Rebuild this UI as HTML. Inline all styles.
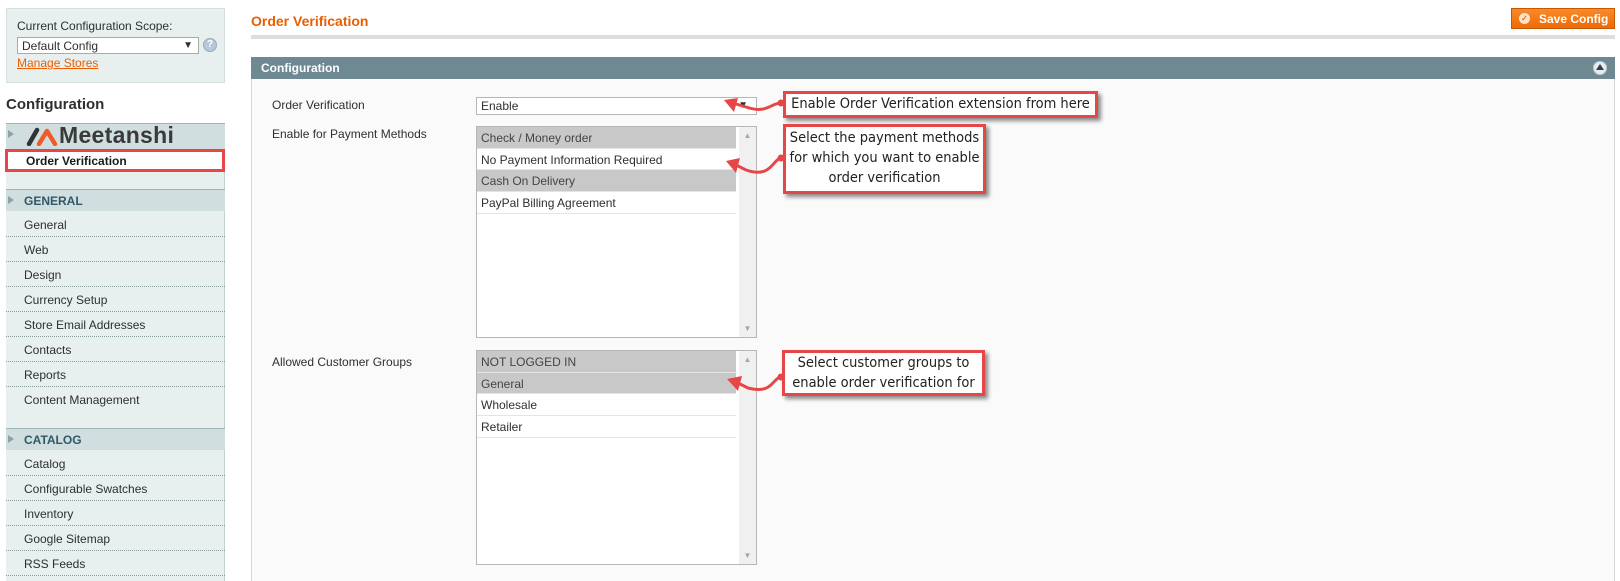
<!DOCTYPE html>
<html><head><meta charset="utf-8"><style>
*{margin:0;padding:0;box-sizing:border-box}
body{width:1620px;height:581px;overflow:hidden;background:#fff;font-family:"Liberation Sans",Arial,sans-serif;font-size:12px;color:#2f2f2f;position:relative}
.a{position:absolute}
.side{left:6px;top:8px;width:219px;height:75px;background:#e7efef;border:1px solid #d6dfdf}
.nav{left:6px;width:219px;background:#e7efef;border-right:1px solid #c2d0d1}
.hd{position:absolute;left:6px;width:219px;height:22px;background:#d1dedf;border-top:1px solid #9fb3b6;color:#2f5966;font-weight:bold;font-size:12px;padding:4px 0 0 18px}
.hd:before{content:"";position:absolute;left:2px;top:6px;border-left:6px solid #8aa3a8;border-top:4px solid transparent;border-bottom:4px solid transparent}
.it{position:absolute;left:6px;width:219px;height:25px;border-bottom:1px dotted #8a9a9c;padding:6px 0 0 18px;color:#2f2f2f}
.lbl{position:absolute;left:272px;color:#2f2f2f}
.box{position:absolute;left:476px;width:281px;background:#fff;border:1px solid #b6b6b6}
.row{height:21.7px;padding:4px 0 0 4px;border-bottom:1px solid #e4e4e4;width:259px}
.sel{background:#c8c8c8;color:#444}
.sb{position:absolute;right:0;top:0;bottom:0;width:17px;background:#f0f0f0;color:#a6a6a6;font-size:8px;text-align:center}
.co{position:absolute;background:#fff;border:3px solid #e64646;box-shadow:3px 3px 4px rgba(0,0,0,.45);font-family:"DejaVu Sans Condensed","Liberation Sans",sans-serif;font-size:14.5px;color:#222;text-align:center;line-height:20px;white-space:nowrap}
</style></head><body>
<div class="a side"></div>
<div class="a" style="left:17px;top:19px;font-size:12px">Current Configuration Scope:</div>
<div class="a" style="left:17px;top:37px;width:182px;height:17px;border:1px solid #aaa;background:#fff;padding:1px 4px;font-size:12px">Default Config<span style="position:absolute;right:5px;top:2px;font-size:10px">▼</span></div>
<div class="a" style="left:203px;top:38px;width:14px;height:14px;border-radius:50%;background:#b7c9d8;border:1px solid #9ab;color:#fff;font-size:10px;text-align:center;line-height:12px;font-weight:bold">?</div>
<div class="a" style="left:17px;top:56px;color:#eb5e00;text-decoration:underline">Manage Stores</div>
<div class="a" style="left:6px;top:96px;font-size:15px;font-weight:bold;color:#2f2f2f">Configuration</div>
<div class="a nav" style="top:123px;height:458px"></div>
<div class="a" style="left:6px;top:123px;width:219px;height:26px;background:#d1dedf;border-top:1px solid #9fb3b6"></div>
<div class="a" style="left:8px;top:130px;border-left:6px solid #8aa3a8;border-top:4px solid transparent;border-bottom:4px solid transparent"></div>
<svg class="a" style="left:26px;top:126px" width="36" height="20"><path d="M3 18 L11 4" stroke="#333" stroke-width="4.5" stroke-linecap="round"/><path d="M13 18 L21 5 L29 18" stroke="#f05a28" stroke-width="4.5" fill="none" stroke-linecap="round" stroke-linejoin="round"/></svg>
<div class="a" style="left:59px;top:122px;font-size:23px;font-weight:bold;color:#3a3a3a;letter-spacing:0.3px">Meetanshi</div>
<div class="a" style="left:5px;top:149px;width:220px;height:23px;border:3px solid #e64646;background:#fff;padding:2px 0 0 18px;font-weight:bold;color:#1a1a1a">Order Verification</div>
<div class="hd" style="top:189px">GENERAL</div>
<div class="it" style="top:212px">General</div>
<div class="it" style="top:237px">Web</div>
<div class="it" style="top:262px">Design</div>
<div class="it" style="top:287px">Currency Setup</div>
<div class="it" style="top:312px">Store Email Addresses</div>
<div class="it" style="top:337px">Contacts</div>
<div class="it" style="top:362px">Reports</div>
<div class="it" style="top:387px;border:none">Content Management</div>
<div class="hd" style="top:428px">CATALOG</div>
<div class="it" style="top:451px">Catalog</div>
<div class="it" style="top:476px">Configurable Swatches</div>
<div class="it" style="top:501px">Inventory</div>
<div class="it" style="top:526px">Google Sitemap</div>
<div class="it" style="top:551px">RSS Feeds</div>

<div class="a" style="left:251px;top:13px;font-size:14px;font-weight:bold;color:#eb5e00">Order Verification</div>
<div class="a" style="left:251px;top:35px;width:1364px;height:4px;background:#dedede"></div>
<div class="a" style="left:1511px;top:8px;width:104px;height:21px;background:linear-gradient(#f98a28,#ee6a07);border:1px solid #c75700;color:#fff;font-weight:bold;font-size:12px;padding:3px 0 0 27px">Save Config</div>
<div class="a" style="left:1519px;top:13px;width:11px;height:11px;border-radius:50%;background:#fde3cc;color:#ee6a07;font-size:8px;text-align:center;line-height:11px;font-weight:bold">✓</div>
<div class="a" style="left:251px;top:57px;width:1364px;height:22px;background:#6f8992;color:#fff;font-weight:bold;padding:4px 0 0 10px">Configuration</div>
<div class="a" style="left:1593px;top:61px;width:14px;height:14px;border-radius:50%;background:#e8ecee;border:1px solid #c0cbd0"></div>
<div class="a" style="left:1596px;top:64px;border-bottom:6px solid #2a3f4f;border-left:4px solid transparent;border-right:4px solid transparent"></div>
<div class="a" style="left:251px;top:79px;width:1364px;height:502px;background:#fafafa;border-left:1px solid #d6d6d6;border-right:1px solid #d6d6d6"></div>

<div class="lbl" style="top:98px">Order Verification</div>
<div class="lbl" style="top:127px">Enable for Payment Methods</div>
<div class="lbl" style="top:355px">Allowed Customer Groups</div>
<div class="box" style="top:97px;height:18px;padding:1px 4px">Enable<span style="position:absolute;right:8px;top:2px;font-size:10px">▼</span></div>
<div class="box" style="top:126px;height:212px">
<div class="row sel">Check / Money order</div>
<div class="row">No Payment Information Required</div>
<div class="row sel">Cash On Delivery</div>
<div class="row">PayPal Billing Agreement</div>
<div class="sb"><div style="margin-top:4px">▲</div><div style="position:absolute;bottom:4px;width:100%">▼</div></div>
</div>
<div class="box" style="top:350px;height:215px">
<div class="row sel">NOT LOGGED IN</div>
<div class="row sel">General</div>
<div class="row">Wholesale</div>
<div class="row">Retailer</div>
<div class="sb"><div style="margin-top:4px">▲</div><div style="position:absolute;bottom:4px;width:100%">▼</div></div>
</div>

<div class="co" style="left:783px;top:91px;width:315px;height:27px;line-height:21px">Enable Order Verification extension from here</div>
<div class="co" style="left:783px;top:124px;width:203px;height:70px;padding-top:1px">Select the payment methods<br>for which you want to enable<br>order verification</div>
<div class="co" style="left:782px;top:350px;width:203px;height:46px;padding-top:0px">Select customer groups to<br>enable order verification for</div>
<svg class="a" style="left:700px;top:80px" width="100" height="330">
<g stroke="#e64646" stroke-width="3" fill="none">
<path d="M80 23 C70 24 66 34 46 27 L36 24"/>
<path d="M80 78 C72 82 70 98 46 90 L36 85"/>
<path d="M80 297 C72 300 72 314 48 308 L38 303"/>
</g>
<g fill="#e64646">
<circle cx="81" cy="23" r="3.5"/><circle cx="81" cy="78" r="3.5"/><circle cx="81" cy="297" r="3.5"/>
<path d="M24 20 L38 18 L34 32z"/><path d="M26 81 L40 78 L36 93z"/><path d="M27 299 L42 296 L38 311z"/>
</g></svg>
</body></html>
